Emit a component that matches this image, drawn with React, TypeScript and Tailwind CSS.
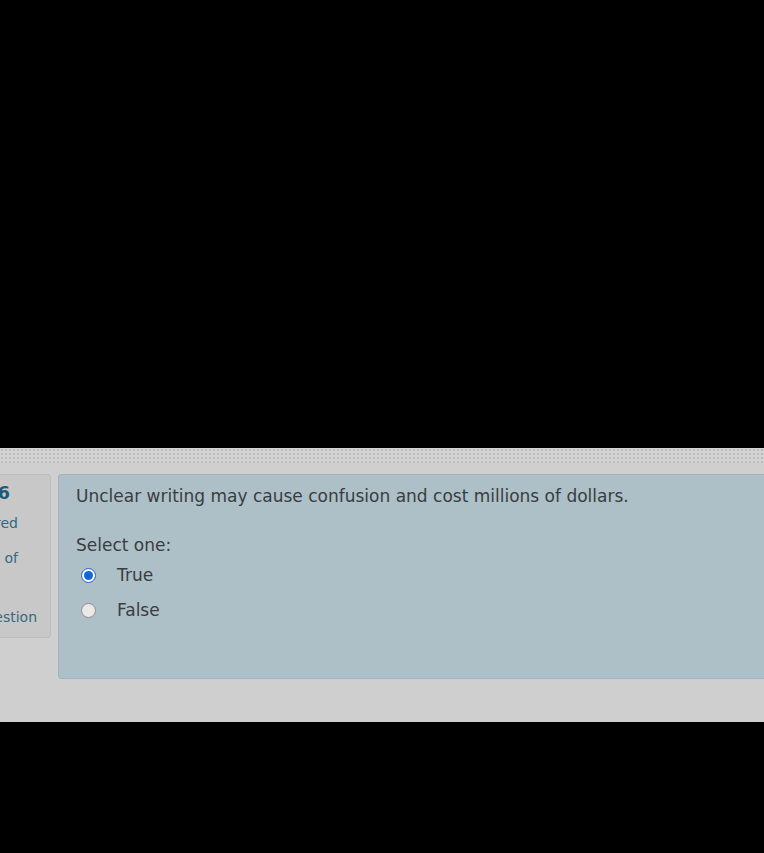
import { useState } from "react";

const QuestionInfo = () => (
  <div className="ml-[-110px] w-[161px] h-[164px] shrink-0 rounded-[3px] border border-[#bcbcbc] bg-[#c8c8c8] pl-2 pt-[5px] text-[#35697f] flex flex-col items-end">
    <h3 className="text-[18px] leading-[26px] font-bold text-[#1d5a74] pr-[40px]">Question 6</h3>
    <p className="mt-[7px] text-[14px] leading-[20px] pr-[32px]">Answered</p>
    <p className="mt-[15px] text-[14px] leading-[21px] pr-[32px]">Marked out of</p>
    <p className="self-start text-[14px] leading-[21px]">1.00</p>
    <p className="mt-[17px] text-[14px] leading-[20px] pr-[13px]">Flag question</p>
  </div>
);

const Radio = ({ checked, label, onClick }: { checked: boolean; label: string; onClick: () => void }) => (
  <label onClick={onClick} className="flex items-center h-[35px] cursor-pointer">
    <span
      className={
        checked
          ? "ml-[5px] size-[15px] rounded-full border border-[#1f63c9] bg-white flex items-center justify-center"
          : "ml-[5px] size-[15px] rounded-full border border-[#8d8d8d] bg-[#ece8e8]"
      }
    >
      {checked && <span className="size-[9px] rounded-full bg-[#1565d8]" />}
    </span>
    <span className="ml-[21px]">{label}</span>
  </label>
);

export default function App() {
  const [answer, setAnswer] = useState("true");

  return (
    <div className="w-[764px] h-[853px] bg-black flex flex-col overflow-hidden" style={{ fontFamily: '"DejaVu Sans", Verdana, sans-serif' }}>
      <div className="h-[448px] shrink-0" />

      <div className="h-[274px] shrink-0 bg-[#cfcfcf] flex flex-col">
        <div className="h-[15px] bg-[#d3d3d3] bg-[radial-gradient(#bcbcbc_1px,transparent_1.2px)] bg-[length:4px_4px]" />

        <div className="flex gap-[7px] mt-[11px]">
          <QuestionInfo />

          <div className="flex-1 h-[205px] mr-[-20px] rounded-[3px] border border-[#9fb6c1] bg-[#adbfc7] pl-[17px] pt-[8px] text-[17px] text-[#3a3d3f]">
            <p className="leading-[26px]">Unclear writing may cause confusion and cost millions of dollars.</p>
            <p className="mt-[23px] leading-[26px]">Select one:</p>
            <div className="flex flex-col">
              <Radio checked={answer === "true"} label="True" onClick={() => setAnswer("true")} />
              <Radio checked={answer === "false"} label="False" onClick={() => setAnswer("false")} />
            </div>
          </div>
        </div>
      </div>

      <div className="flex-1" />
    </div>
  );
}
